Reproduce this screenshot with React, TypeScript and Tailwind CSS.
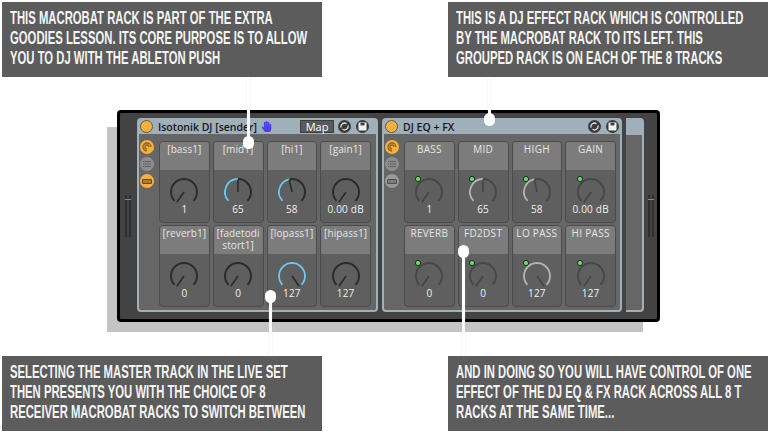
import React from 'react'
import { FaHandPaper } from 'react-icons/fa'

const captionFont = "font-['Liberation_Sans',sans-serif]"
const rackFont = "font-['Open_Sans','Liberation_Sans',sans-serif]"

type Knob = { label: string, value: string, amount: number, lit?: boolean }

const senderKnobs: Knob[] = [
    { label: '[bass1]', value: '1', amount: 0 },
    { label: '[mid1]', value: '65', amount: 0.5, lit: true },
    { label: '[hi1]', value: '58', amount: 0.457, lit: true },
    { label: '[gain1]', value: '0.00 dB', amount: 0 },
    { label: '[reverb1]', value: '0', amount: 0 },
    { label: '[fadetodi stort1]', value: '0', amount: 0 },
    { label: '[lopass1]', value: '127', amount: 1, lit: true },
    { label: '[hipass1]', value: '127', amount: 0 },
]

const fxKnobs: Knob[] = [
    { label: 'BASS', value: '1', amount: 0 },
    { label: 'MID', value: '65', amount: 0.5, lit: true },
    { label: 'HIGH', value: '58', amount: 0.457, lit: true },
    { label: 'GAIN', value: '0.00 dB', amount: 0 },
    { label: 'REVERB', value: '0', amount: 0 },
    { label: 'FD2DST', value: '0', amount: 0 },
    { label: 'LO PASS', value: '127', amount: 1, lit: true },
    { label: 'HI PASS', value: '127', amount: 0 },
]

function polar(deg: number, r: number) {
    const a = (deg * Math.PI) / 180
    return { x: 16 + r * Math.sin(a), y: 16 - r * Math.cos(a) }
}

function arc(from: number, to: number, r: number) {
    const s = polar(from, r)
    const e = polar(to, r)
    const large = to - from > 180 ? 1 : 0
    return `M${s.x} ${s.y}A${r} ${r} 0 ${large} 1 ${e.x} ${e.y}`
}

function Dial({ knob, fx }: { knob: Knob, fx?: boolean }) {
    const tip = polar(-145 + knob.amount * 290, 12.5)
    const litEnd = -133 + knob.amount * 266
    return (
        <svg width="32" height="32" viewBox="0 0 32 32" className="mt-[6px] -mb-[5px] overflow-visible">
            <path d={arc(-133, 133, 13)} fill="none" stroke={fx ? '#474747' : '#2b2b2b'} strokeWidth="1.9" />
            {knob.lit && (
                <path d={arc(-133, litEnd, 13)} fill="none" stroke={fx ? '#b4b4b4' : '#6fc8ef'} strokeWidth="1.9" />
            )}
            <line x1="16" y1="16" x2={tip.x} y2={tip.y} stroke={fx ? '#454545' : '#2b2b2b'} strokeWidth="1.6" />
            {fx && <circle cx="5" cy="3" r="2.6" fill="#5ee55a" stroke="#262626" strokeWidth="1" />}
        </svg>
    )
}

function Cell({ knob, fx }: { knob: Knob, fx?: boolean }) {
    return (
        <div className="h-[82px] rounded-[4px] border border-[#4b4b4b] bg-[#5f5f5f] overflow-hidden flex flex-col items-center">
            <div className={`w-full h-[28px] bg-[#7c7c7c] pt-[1px] px-[1px] text-center text-[10px] leading-[12px] text-[#e6e6e6] break-words ${fx ? 'tracking-[0.3px]' : 'tracking-[0.1px]'}`}>
                {knob.label}
            </div>
            <Dial knob={knob} fx={fx} />
            <div className="text-[10px] leading-[12px] tracking-[0.2px] text-[#f0f0f0]">{knob.value}</div>
        </div>
    )
}

function RoundButton({ children, className }: { children: React.ReactNode, className: string }) {
    return (
        <div className={`w-[14px] h-[14px] rounded-full flex items-center justify-center ${className}`}>
            {children}
        </div>
    )
}

function SwirlButton() {
    return (
        <RoundButton className="bg-[#f3b03e]">
            <svg width="10" height="10" viewBox="0 0 10 10">
                <path d="M5 9A4 4 0 1 1 9 5M5 7A2 2 0 1 1 7 5" fill="none" stroke="#8f6320" strokeWidth="1.3" />
            </svg>
        </RoundButton>
    )
}

function ListButton() {
    return (
        <RoundButton className="bg-[#8e8e8e]">
            <svg width="8" height="8" viewBox="0 0 8 8">
                <path d="M0 1.500h8M0 4h8M0 6.500h8" stroke="#5c5c5c" strokeWidth="1" strokeDasharray="1 .5 6.500 0" />
            </svg>
        </RoundButton>
    )
}

function BarButton({ on }: { on?: boolean }) {
    return (
        <RoundButton className={on ? 'bg-[#f3b03e]' : 'bg-[#9a9a9a]'}>
            <div className={`w-[10px] h-[5px] rounded-[1px] border ${on ? 'bg-[#a8802f] border-[#5b4a26]' : 'bg-[#7a7a7a] border-[#4e4e4e]'}`} />
        </RoundButton>
    )
}

function SwapButton() {
    return (
        <div className="w-[13px] h-[13px] rounded-full bg-[#3b3b3b] flex items-center justify-center">
            <svg width="9" height="9" viewBox="0 0 9 9">
                <path d="M1 5.500A3.600 3.600 0 0 1 6.500 1.700M8 3.500A3.600 3.600 0 0 1 2.500 7.300" fill="none" stroke="#e4e4e4" strokeWidth="1.3" />
            </svg>
        </div>
    )
}

function SaveButton() {
    return (
        <div className="w-[13px] h-[13px] rounded-full bg-[#3b3b3b] flex items-center justify-center">
            <svg width="9" height="9" viewBox="0 0 9 9">
                <path d="M.5 1.200a.7.7 0 0 1 .7-.7h6.600a.7.7 0 0 1 .7.7v6.600a.7.7 0 0 1-.7.7H1.200a.7.7 0 0 1-.7-.7z" fill="#f2f2f2" />
                <rect x="2.500" y="1" width="4" height="2.400" fill="#3b3b3b" />
            </svg>
        </div>
    )
}

function Meter() {
    return (
        <div className="w-[6px] h-[42px] flex justify-between relative">
            <div className="w-[2px] h-full bg-[#2f2f2f]" />
            <div className="w-[2px] h-full bg-[#2f2f2f]" />
            <div className="absolute left-0 top-[4px] w-full h-[1px] bg-[#8a8a8a]" />
        </div>
    )
}

function Rack({ title, knobs, fx, width, children }: { title: string, knobs: Knob[], fx?: boolean, width: string, children: React.ReactNode }) {
    return (
        <div className={`${width} h-[194px] rounded-[4px] border-2 border-[#9fb0ba] bg-[#666666] flex flex-col`}>
            <div className="h-[15px] -mt-[1px] shrink-0 bg-[#9fb0ba] flex items-center pl-[1px] pr-[1px]">
                <div className="w-[13px] h-[13px] rounded-full bg-[#f3b03e] border border-[#6b5a35]" />
                <span className="ml-[5px] text-[10.5px] leading-[14px] font-semibold text-[#161616] whitespace-nowrap">{title}</span>
                {children}
            </div>
            <div className="flex flex-1 pt-[7px]">
                <div className="w-[20px] -mt-[1px] flex flex-col pl-[1px] gap-[3px]">
                    <SwirlButton />
                    <ListButton />
                    <BarButton on={!fx} />
                </div>
                <div className="w-[212px] grid grid-cols-4 gap-x-[3px] gap-y-[2px] content-start">
                    {knobs.map((knob) => <Cell key={knob.label} knob={knob} fx={fx} />)}
                </div>
            </div>
        </div>
    )
}

function Caption({ lines }: { lines: string[] }) {
    return (
        <div className={`w-[320px] h-[75px] bg-[#5c5c5c] pl-[8px] pt-[6px] text-[19px] leading-[20px] font-bold text-[#f4f4f4] uppercase ${captionFont}`}>
            {lines.map((line) => <div key={line} className="w-max whitespace-nowrap origin-left scale-x-[0.595]">{line}</div>)}
        </div>
    )
}

function Callout({ className }: { className: string }) {
    return <div className={`absolute w-[3px] bg-white shadow-[0_0_1px_#bbbbbb] ${className}`} />
}

function Dot({ className }: { className: string }) {
    return <div className={`absolute w-[11px] h-[13px] rounded-full bg-white ${className}`} />
}

export default function App() {
    return (
        <div className="relative w-[768px] h-[432px] overflow-hidden bg-white pl-[2px] pt-[2px]">
            <div className="flex justify-between">
                <Caption lines={['This Macrobat rack is part of the extra', 'goodies lesson. Its core purpose is to allow', 'you to DJ with the Ableton Push']} />
                <Caption lines={['This is a DJ effect rack which is controlled', 'by the Macrobat rack to its left. This', 'grouped rack is on each of the 8 tracks']} />
            </div>

            <div className={`mt-[33px] ml-[115px] w-[543px] h-[212px] rounded-[4px] border-[3px] border-black bg-[#434343] shadow-[-13.5px_13.5px_0_-3.5px_#c4c4c4] flex pt-[5px] ${rackFont}`}>
                <div className="w-[17px] flex justify-center pt-[77px] pr-[2px]"><Meter /></div>
                <Rack title="Isotonik DJ [sender]" knobs={senderKnobs} width="w-[241px]">
                    <FaHandPaper className="ml-[4px] text-[#4c3ff0]" size={11} />
                    <div className="ml-auto w-[34px] h-[13px] bg-[#5a5a5a] border border-[#3e3e3e] text-center text-[11px] leading-[11px] text-white">Map</div>
                    <div className="ml-[4px] mr-[6px] flex gap-[5px]"><SwapButton /><SaveButton /></div>
                </Rack>
                <div className="ml-[4px]">
                    <Rack title="DJ EQ + FX" knobs={fxKnobs} fx width="w-[240px]">
                        <div className="ml-auto flex gap-[5px]"><SwapButton /><SaveButton /></div>
                    </Rack>
                </div>
                <div className="ml-[4px] w-[18px] h-[194px] rounded-r-[4px] border-2 border-l-0 border-[#9fb0ba] bg-[#666666]">
                    <div className="h-[15px] bg-[#9fb0ba]" />
                </div>
                <div className="flex-1 flex justify-center pt-[77px]"><Meter /></div>
            </div>

            <div className="mt-[34px] flex justify-between">
                <Caption lines={['Selecting the Master track in the Live set', 'then presents you with the choice of 8', 'receiver Macrobat racks to switch between']} />
                <Caption lines={['And in doing so you will have control of one', 'effect of the DJ EQ & FX rack across all 8 T', 'racks at the same time...']} />
            </div>

            <Callout className="left-[247px] top-[77px] h-[64px]" />
            <Dot className="left-[243px] top-[136px]" />
            <Callout className="left-[488px] top-[77px] h-[41px]" />
            <Dot className="left-[484px] top-[113px]" />
            <Callout className="left-[269px] top-[297px] h-[59px]" />
            <Dot className="left-[265px] top-[290px]" />
            <Callout className="left-[462px] top-[252px] h-[104px]" />
            <Dot className="left-[458px] top-[245px]" />
        </div>
    )
}
